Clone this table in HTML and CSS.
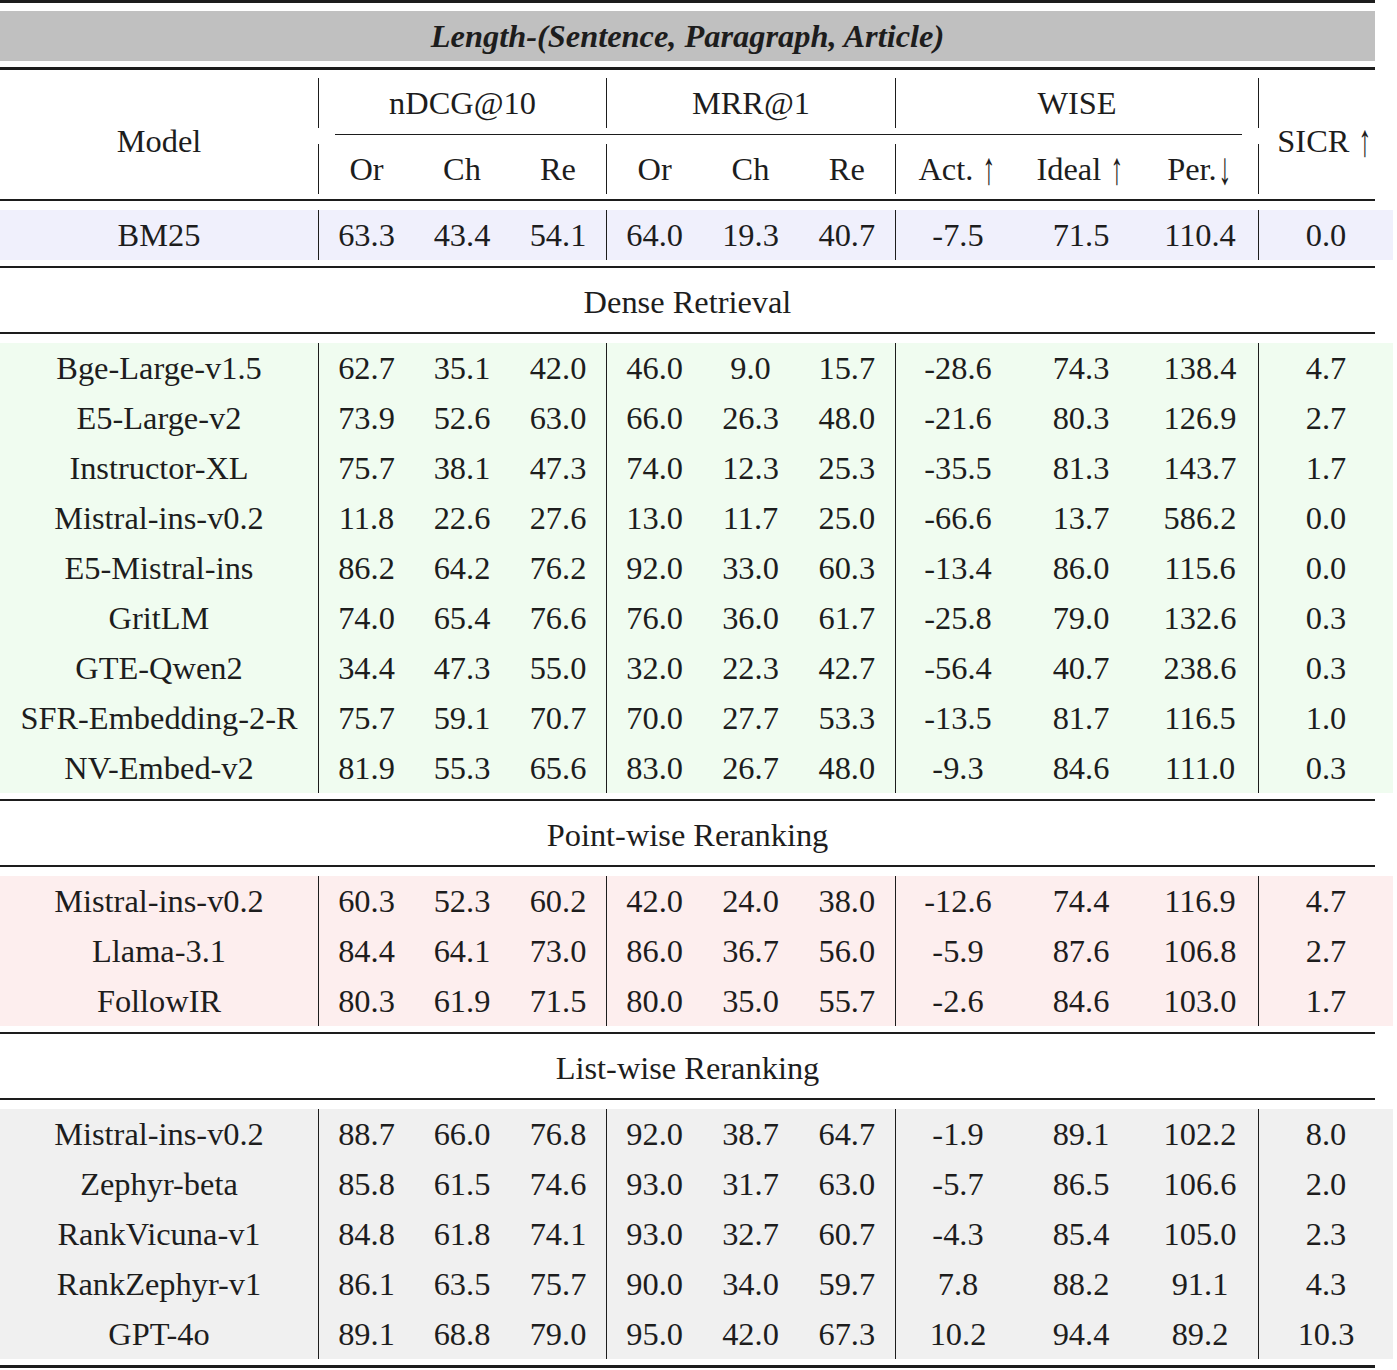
FILE: index.html
```html
<!DOCTYPE html>
<html lang="en">
<head>
<meta charset="utf-8">
<title>Length-(Sentence, Paragraph, Article)</title>
<link rel="stylesheet" href="styles.css">
</head>
<body>
<div class="table">
  <div class="rule heavy top"></div>
  <div class="band">Length-(Sentence, Paragraph, Article)</div>
  <div class="rule heavy"></div>

  <div class="cols head">
    <div class="model">Model</div>
    <div class="grp g1 s">nDCG@10</div>
    <div class="grp g2 s">MRR@1</div>
    <div class="grp g3 s">WISE</div>
    <div class="vl r1 s"></div>
    <div class="sicr">SICR&nbsp;<span class="arr">↑</span></div>
    <div class="cmid"></div>
    <div class="sub k2 s">Or</div>
    <div class="sub k3">Ch</div>
    <div class="sub k4">Re</div>
    <div class="sub k5 s">Or</div>
    <div class="sub k6">Ch</div>
    <div class="sub k7">Re</div>
    <div class="sub k8 s">Act.&nbsp;<span class="arr">↑</span></div>
    <div class="sub k9">Ideal&nbsp;<span class="arr">↑</span></div>
    <div class="sub k10">Per.<span class="arr">↓</span></div>
    <div class="vl r5 s"></div>
  </div>
  <div class="rule"></div>

  <div class="blk lav">
    <div class="row cols"><div>BM25</div><div class="s">63.3</div><div>43.4</div><div>54.1</div><div class="s">64.0</div><div>19.3</div><div>40.7</div><div class="s">-7.5</div><div>71.5</div><div>110.4</div><div class="s">0.0</div></div>
  </div>
  <div class="rule"></div>

  <div class="sec">Dense Retrieval</div>
  <div class="rule"></div>

  <div class="blk green">
    <div class="row cols"><div>Bge-Large-v1.5</div><div class="s">62.7</div><div>35.1</div><div>42.0</div><div class="s">46.0</div><div>9.0</div><div>15.7</div><div class="s">-28.6</div><div>74.3</div><div>138.4</div><div class="s">4.7</div></div>
    <div class="row cols"><div>E5-Large-v2</div><div class="s">73.9</div><div>52.6</div><div>63.0</div><div class="s">66.0</div><div>26.3</div><div>48.0</div><div class="s">-21.6</div><div>80.3</div><div>126.9</div><div class="s">2.7</div></div>
    <div class="row cols"><div>Instructor-XL</div><div class="s">75.7</div><div>38.1</div><div>47.3</div><div class="s">74.0</div><div>12.3</div><div>25.3</div><div class="s">-35.5</div><div>81.3</div><div>143.7</div><div class="s">1.7</div></div>
    <div class="row cols"><div>Mistral-ins-v0.2</div><div class="s">11.8</div><div>22.6</div><div>27.6</div><div class="s">13.0</div><div>11.7</div><div>25.0</div><div class="s">-66.6</div><div>13.7</div><div>586.2</div><div class="s">0.0</div></div>
    <div class="row cols"><div>E5-Mistral-ins</div><div class="s">86.2</div><div>64.2</div><div>76.2</div><div class="s">92.0</div><div>33.0</div><div>60.3</div><div class="s">-13.4</div><div>86.0</div><div>115.6</div><div class="s">0.0</div></div>
    <div class="row cols"><div>GritLM</div><div class="s">74.0</div><div>65.4</div><div>76.6</div><div class="s">76.0</div><div>36.0</div><div>61.7</div><div class="s">-25.8</div><div>79.0</div><div>132.6</div><div class="s">0.3</div></div>
    <div class="row cols"><div>GTE-Qwen2</div><div class="s">34.4</div><div>47.3</div><div>55.0</div><div class="s">32.0</div><div>22.3</div><div>42.7</div><div class="s">-56.4</div><div>40.7</div><div>238.6</div><div class="s">0.3</div></div>
    <div class="row cols"><div>SFR-Embedding-2-R</div><div class="s">75.7</div><div>59.1</div><div>70.7</div><div class="s">70.0</div><div>27.7</div><div>53.3</div><div class="s">-13.5</div><div>81.7</div><div>116.5</div><div class="s">1.0</div></div>
    <div class="row cols"><div>NV-Embed-v2</div><div class="s">81.9</div><div>55.3</div><div>65.6</div><div class="s">83.0</div><div>26.7</div><div>48.0</div><div class="s">-9.3</div><div>84.6</div><div>111.0</div><div class="s">0.3</div></div>
  </div>
  <div class="rule"></div>

  <div class="sec">Point-wise Reranking</div>
  <div class="rule"></div>

  <div class="blk pink">
    <div class="row cols"><div>Mistral-ins-v0.2</div><div class="s">60.3</div><div>52.3</div><div>60.2</div><div class="s">42.0</div><div>24.0</div><div>38.0</div><div class="s">-12.6</div><div>74.4</div><div>116.9</div><div class="s">4.7</div></div>
    <div class="row cols"><div>Llama-3.1</div><div class="s">84.4</div><div>64.1</div><div>73.0</div><div class="s">86.0</div><div>36.7</div><div>56.0</div><div class="s">-5.9</div><div>87.6</div><div>106.8</div><div class="s">2.7</div></div>
    <div class="row cols"><div>FollowIR</div><div class="s">80.3</div><div>61.9</div><div>71.5</div><div class="s">80.0</div><div>35.0</div><div>55.7</div><div class="s">-2.6</div><div>84.6</div><div>103.0</div><div class="s">1.7</div></div>
  </div>
  <div class="rule"></div>

  <div class="sec">List-wise Reranking</div>
  <div class="rule"></div>

  <div class="blk grey">
    <div class="row cols"><div>Mistral-ins-v0.2</div><div class="s">88.7</div><div>66.0</div><div>76.8</div><div class="s">92.0</div><div>38.7</div><div>64.7</div><div class="s">-1.9</div><div>89.1</div><div>102.2</div><div class="s">8.0</div></div>
    <div class="row cols"><div>Zephyr-beta</div><div class="s">85.8</div><div>61.5</div><div>74.6</div><div class="s">93.0</div><div>31.7</div><div>63.0</div><div class="s">-5.7</div><div>86.5</div><div>106.6</div><div class="s">2.0</div></div>
    <div class="row cols"><div>RankVicuna-v1</div><div class="s">84.8</div><div>61.8</div><div>74.1</div><div class="s">93.0</div><div>32.7</div><div>60.7</div><div class="s">-4.3</div><div>85.4</div><div>105.0</div><div class="s">2.3</div></div>
    <div class="row cols"><div>RankZephyr-v1</div><div class="s">86.1</div><div>63.5</div><div>75.7</div><div class="s">90.0</div><div>34.0</div><div>59.7</div><div class="s">7.8</div><div>88.2</div><div>91.1</div><div class="s">4.3</div></div>
    <div class="row cols"><div>GPT-4o</div><div class="s">89.1</div><div>68.8</div><div>79.0</div><div class="s">95.0</div><div>42.0</div><div>67.3</div><div class="s">10.2</div><div>94.4</div><div>89.2</div><div class="s">10.3</div></div>
  </div>
  <div class="rule heavy"></div>
</div>
</body>
</html>
```

FILE: styles.css
```css
html, body {
  margin: 0;
  padding: 0;
  background: #ffffff;
}

body {
  font-family: "Liberation Serif", "Times New Roman", serif;
  font-size: 32.4px;
  color: #1d1d1d;
  overflow: hidden;
}

.table {
  width: 1397px;
}

.rule {
  width: 1375px;
  height: 2px;
  background: #1d1d1d;
}

.rule.heavy {
  height: 3px;
}

.band {
  width: 1375px;
  height: 50px;
  margin: 8px 0 6px;
  background: #c0c0c0;
  font-weight: bold;
  font-style: italic;
  text-align: center;
  line-height: 50px;
}

.cols {
  display: grid;
  grid-template-columns: 318px 96px 96px 96px 96.33px 96.33px 96.34px 125px 122px 116px 135px;
  width: 1393px;
}

.s {
  border-left: 1px solid #1d1d1d;
}

/* header */
.head {
  margin: 8px 0 5px;
  grid-template-rows: 50px 6px 1px 9px 50px;
  line-height: 50px;
  text-align: center;
}

.model {
  grid-column: 1;
  grid-row: 1 / 6;
  display: flex;
  align-items: center;
  justify-content: center;
  padding-top: 10px;
}

.sicr {
  grid-column: 11;
  grid-row: 1 / 6;
  display: flex;
  align-items: center;
  justify-content: center;
  padding-top: 10px;
}

.grp { grid-row: 1; }
.g1 { grid-column: 2 / 5; }
.g2 { grid-column: 5 / 8; }
.g3 { grid-column: 8 / 11; }

.vl { grid-column: 11; }
.vl.r1 { grid-row: 1; }
.vl.r5 { grid-row: 5; }

.cmid {
  grid-column: 2 / 11;
  grid-row: 3;
  margin: 0 16px 0 17px;
  background: #1d1d1d;
}

.sub { grid-row: 5; }
.k2 { grid-column: 2; }
.k3 { grid-column: 3; }
.k4 { grid-column: 4; }
.k5 { grid-column: 5; }
.k6 { grid-column: 6; }
.k7 { grid-column: 7; }
.k8 { grid-column: 8; }
.k9 { grid-column: 9; }
.k10 { grid-column: 10; }

.arr {
  display: inline-block;
  font-weight: normal;
  line-height: 1;
  transform: scale(0.8, 1.4) translateY(1px);
  transform-origin: 50% 60%;
}

/* body blocks */
.blk {
  margin: 9px 0 5.5px;
  width: 1393px;
}

.row {
  height: 50px;
  line-height: 50px;
  text-align: center;
  white-space: nowrap;
}

.lav { background: #f0f0fc; }
.green { background: #f0fcf0; }
.pink { background: #fdeeee; }
.grey { background: #f0f0f0; }

.sec {
  width: 1375px;
  height: 50px;
  margin: 9px 0 5.5px;
  line-height: 50px;
  text-align: center;
}
```
